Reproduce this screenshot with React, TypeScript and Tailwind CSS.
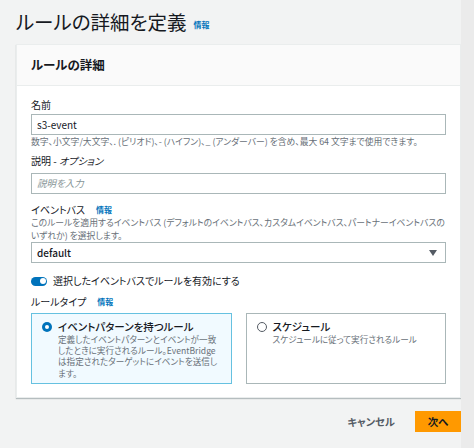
import React from "react";

const font = { fontFamily: '"Noto Sans CJK JP", "Open Sans", sans-serif' };

function Info() {
  return <span className="ml-[11px] text-[8px] font-bold text-[#0073bb]">情報</span>;
}

export default function App() {
  return (
    <div
      className="flex h-[448px] w-[474px] overflow-hidden bg-[#f2f3f3] text-[#16191f] [font-feature-settings:'palt']"
      style={font}
    >
      <div className="flex w-[461px] flex-col pl-[16px]">
        <div className="flex h-[44px] items-center">
          <h1 className="text-[19.5px] font-normal leading-none">ルールの詳細を定義</h1>
          <span className="ml-[7px] mt-[6px] text-[8px] font-bold text-[#0073bb]">情報</span>
        </div>
        <div className="flex flex-col border border-[#eaeded] bg-white shadow-[0_1px_1px_rgba(0,28,36,0.25)]">
          <div className="flex h-[41px] items-center border-b border-[#eaeded] bg-[#fafafa] px-[14px]">
            <h2 className="text-[12.5px] font-bold">ルールの詳細</h2>
          </div>
          <div className="flex flex-col px-[14px] pt-[12px] pb-[13px]">
            <label className="text-[10px] leading-[14px]">名前</label>
            <div className="mt-[2px] flex h-[21px] items-center border border-[#aab7b8] px-[5px] text-[10px]">
              s3-event
            </div>
            <p className="mt-[1px] whitespace-nowrap text-[8.8px] leading-[12px] text-[#687078]">
              数字、小文字/大文字、. (ピリオド)、- (ハイフン)、_ (アンダーバー) を含め、最大 64 文字まで使用できます。
            </p>
            <label className="mt-[6px] text-[10px] leading-[14px]">
              説明 - <i>オプション</i>
            </label>
            <div className="mt-[5px] flex h-[21px] items-center border border-[#aab7b8] px-[5px] text-[9.5px] italic text-[#879596]">
              説明を入力
            </div>
            <div className="mt-[9px] flex h-[14px] items-center text-[10px] leading-[14px]">
              イベントバス
              <Info />
            </div>
            <p className="text-[8.8px] leading-[12.5px] text-[#687078]">
              このルールを適用するイベントバス (デフォルトのイベントバス、カスタムイベントバス、パートナーイベントバスのいずれか) を選択します。
            </p>
            <div className="flex h-[21px] items-center justify-between border border-[#aab7b8] pl-[5px] pr-[8px] text-[10px] font-medium">
              <span>default</span>
              <svg width="8" height="6" viewBox="0 0 8 6">
                <path d="M0 0h8L4 6z" fill="#545b64" />
              </svg>
            </div>
            <div className="mt-[11px] flex h-[14px] items-center">
              <div className="flex h-[9px] w-[16px] items-center justify-end rounded-full bg-[#0073bb] pr-[1.5px]">
                <div className="h-[6px] w-[6px] rounded-full bg-white" />
              </div>
              <span className="ml-[6px] text-[10px] leading-[14px]">選択したイベントバスでルールを有効にする</span>
            </div>
            <div className="mt-[7px] flex items-center text-[10px] leading-[14px]">
              ルールタイプ
              <Info />
            </div>
            <div className="mt-[4px] grid grid-cols-2 gap-[14px]">
              <div className="flex h-[71px] border border-[#66c1e0] bg-[#f1faff] pl-[10px] pt-[5px] pr-[8px]">
                <div className="mt-[3px] flex h-[10px] w-[10px] shrink-0 items-center justify-center rounded-full bg-[#0073bb]">
                  <div className="h-[4px] w-[4px] rounded-full bg-white" />
                </div>
                <div className="ml-[6px] flex flex-col">
                  <span className="text-[10.5px] font-medium leading-[15px]">イベントパターンを持つルール</span>
                  <span className="text-[8.6px] leading-[11.2px] text-[#687078]">
                    定義したイベントパターンとイベントが一致したときに実行されるルール。EventBridge は指定されたターゲットにイベントを送信します。
                  </span>
                </div>
              </div>
              <div className="flex h-[71px] border border-[#aab7b8] bg-white pl-[10px] pt-[5px] pr-[8px]">
                <div className="mt-[3px] h-[10px] w-[10px] shrink-0 rounded-full border border-[#545b64] bg-white" />
                <div className="ml-[6px] flex flex-col">
                  <span className="text-[10.5px] font-medium leading-[15px]">スケジュール</span>
                  <span className="text-[8.6px] leading-[11.2px] text-[#687078]">
                    スケジュールに従って実行されるルール
                  </span>
                </div>
              </div>
            </div>
          </div>
        </div>
        <div className="mt-[13px] flex items-center justify-end">
          <span className="text-[10.3px] font-bold text-[#545b64]">キャンセル</span>
          <div className="ml-[20px] flex h-[21px] w-[46px] items-center justify-center bg-[#ff9900] text-[10.5px] font-bold text-[#16191f]">
            次へ
          </div>
        </div>
      </div>
      <div className="w-[13px] bg-[#ebebeb]" />
    </div>
  );
}
